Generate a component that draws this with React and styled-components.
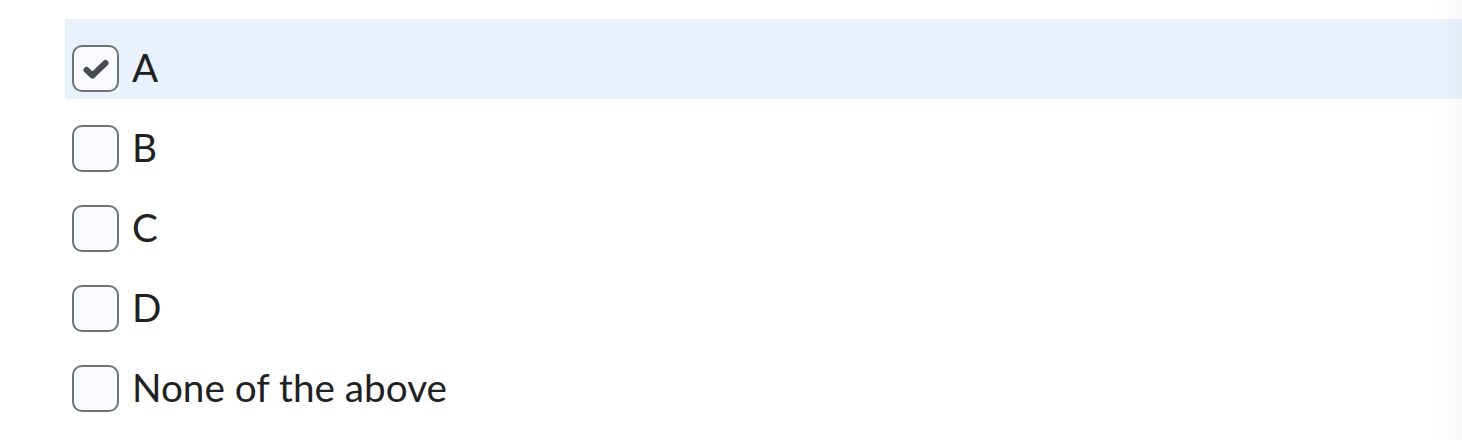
import React, { useState } from 'react'
import styled, { createGlobalStyle } from 'styled-components'

const GlobalStyle = createGlobalStyle`
  html, body {
    margin: 0;
    padding: 0;
    background: #ffffff;
  }
  body {
    font-family: Lato, "Open Sans", sans-serif;
    color: #202122;
  }
`

const Page = styled.div`
  position: relative;
  width: 1462px;
  height: 440px;
  overflow: hidden;
  padding: 19px 0 0 65px;
  box-sizing: border-box;
`

const EdgeShade = styled.div`
  position: absolute;
  top: 0;
  right: 0;
  width: 26px;
  height: 100%;
  background: linear-gradient(to right, rgba(0, 0, 0, 0), rgba(0, 0, 0, 0.025));
  pointer-events: none;
`

const List = styled.div`
  display: flex;
  flex-direction: column;
`

const Row = styled.label`
  display: flex;
  align-items: center;
  gap: 13px;
  height: 80px;
  padding: 19px 0 0 7px;
  box-sizing: border-box;
  background: ${({ $selected }) => ($selected ? '#e9f2fc' : 'transparent')};
  cursor: pointer;
`

const Box = styled.span`
  display: flex;
  align-items: center;
  justify-content: center;
  width: 47px;
  height: 47px;
  box-sizing: border-box;
  border: 2px solid #6e7376;
  border-radius: 10px;
  background: #f9fbff;
  flex-shrink: 0;
`

const Label = styled.span`
  font-size: 38.7px;
  line-height: 1;
  color: #202122;
  padding-bottom: 2px;
`

const Check = () => (
  <svg width="32" height="32" viewBox="0 0 32 32">
    <path
      d="M6.5 17 L12.5 22.5 L25.5 10"
      fill="none"
      stroke="#494c4e"
      strokeWidth="6"
      strokeLinecap="round"
      strokeLinejoin="round"
    />
  </svg>
)

const options = ['A', 'B', 'C', 'D', 'None of the above']

export default function App() {
  const [picked, setPicked] = useState({ A: true })

  return (
    <Page>
      <GlobalStyle />
      <List>
        {options.map((opt) => (
          <Row
            key={opt}
            $selected={!!picked[opt]}
            onClick={() => setPicked((p) => ({ ...p, [opt]: !p[opt] }))}
          >
            <Box>{picked[opt] && <Check />}</Box>
            <Label>{opt}</Label>
          </Row>
        ))}
      </List>
      <EdgeShade />
    </Page>
  )
}
